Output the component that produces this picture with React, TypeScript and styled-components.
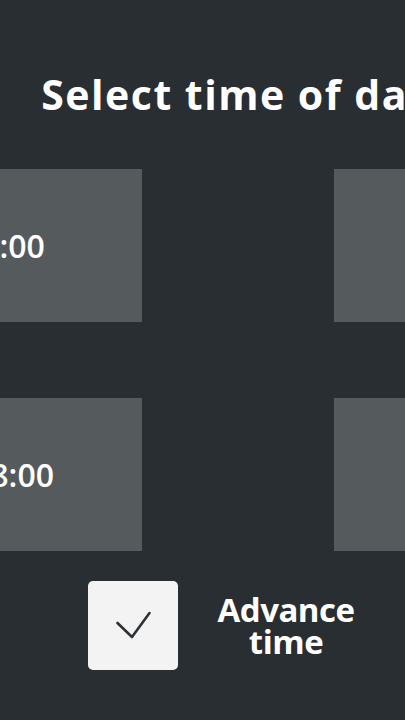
import React from "react";
import styled, { createGlobalStyle } from "styled-components";

const GlobalStyle = createGlobalStyle`
  html, body {
    margin: 0;
    padding: 0;
    background-color: #282e31;
    overflow: hidden;
  }
  body {
    font-family: "Open Sans", "Noto Sans", sans-serif;
    color: #ffffff;
  }
`;

const Screen = styled.div`
  width: 476px;
  height: 720px;
  display: flex;
  flex-direction: column;
  align-items: center;
  box-sizing: border-box;
  padding-top: 70px;
`;

const Title = styled.h1`
  margin: 0 2px 0 0;
  font-size: 41px;
  line-height: 48px;
  font-weight: 700;
  white-space: nowrap;
  letter-spacing: 1.5px;
`;

const TileGrid = styled.div`
  display: grid;
  grid-template-columns: repeat(2, 258px);
  grid-auto-rows: 153px;
  column-gap: 192px;
  row-gap: 76px;
  margin-top: 51px;
  flex-shrink: 0;
`;

const Tile = styled.button`
  border: none;
  padding: 0;
  background-color: #555a5d;
  color: #ffffff;
  font-family: inherit;
  font-size: 32px;
  font-weight: 600;
  display: flex;
  align-items: center;
  justify-content: center;
  cursor: pointer;
`;

const OptionRow = styled.label`
  align-self: flex-start;
  margin-left: 88px;
  margin-top: 30px;
  display: flex;
  align-items: center;
  gap: 37px;
  cursor: pointer;
`;

const CheckBox = styled.span<{ checked?: boolean }>`
  width: 90px;
  height: 89px;
  border-radius: 5px;
  background-color: #f3f3f4;
  display: flex;
  align-items: center;
  justify-content: center;
  svg {
    visibility: ${(props) => (props.checked ? "visible" : "hidden")};
  }
`;

const OptionText = styled.span`
  font-size: 33px;
  line-height: 32px;
  font-weight: 700;
  letter-spacing: -0.5px;
  text-align: center;
  width: 142px;
`;

const times = ["6:00", "12:00", "18:00", "0:00"];

const App: React.FunctionComponent = () => {
  return (
    <>
      <GlobalStyle />
      <Screen>
        <Title>Select time of day</Title>
        <TileGrid>
          {times.map((time) => (
            <Tile key={time}>{time}</Tile>
          ))}
        </TileGrid>
        <OptionRow>
          <CheckBox checked={true}>
            <svg width="90" height="89" viewBox="0 0 90 89">
              <polyline
                points="29.5,42 44,56 61.5,32"
                fill="none"
                stroke="#2d3235"
                strokeWidth="2.6"
                strokeLinecap="round"
                strokeLinejoin="round"
              />
            </svg>
          </CheckBox>
          <OptionText>
            Advance
            <br />
            time
          </OptionText>
        </OptionRow>
      </Screen>
    </>
  );
};

export default App;
